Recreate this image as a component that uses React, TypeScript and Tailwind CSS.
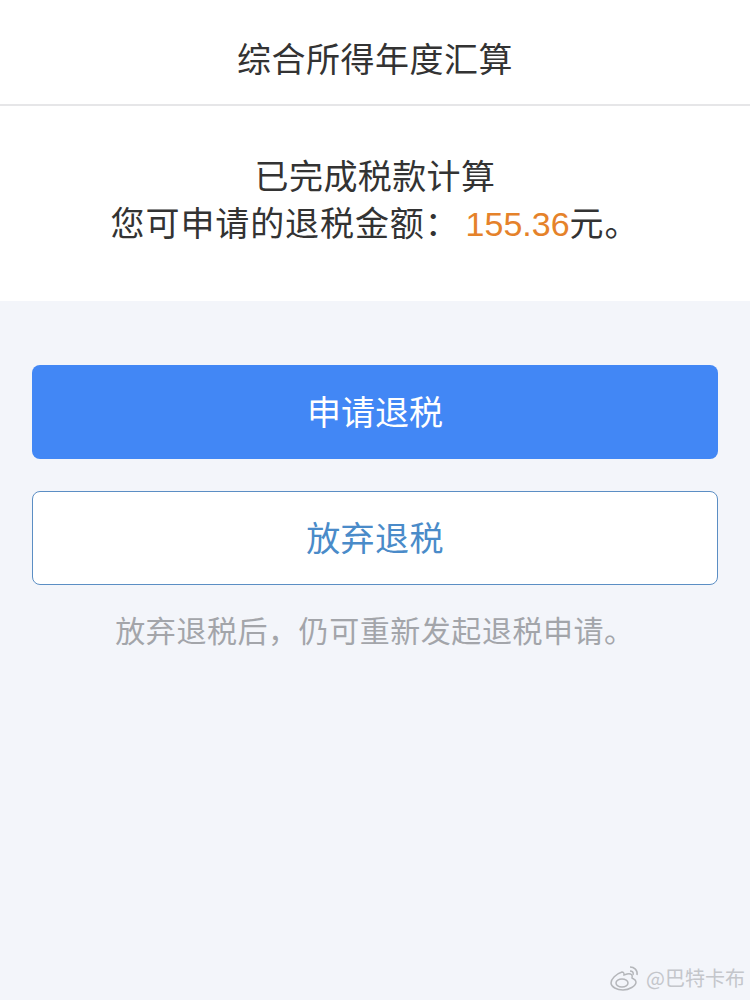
export default function App() {
  return (
    <div className="relative flex h-[1000px] w-[750px] flex-col bg-[#f3f5fa] font-['Noto_Sans_CJK_SC',sans-serif]">
      <header className="flex h-[106px] items-center justify-center border-b-2 border-[#e6e6e8] bg-white pt-[11px]">
        <h1 className="text-[34px] leading-none tracking-[0.5px] text-[#333333]">综合所得年度汇算</h1>
      </header>

      <section className="flex h-[195px] flex-col items-center bg-white pt-[45px] text-[34px] leading-[47px] text-[#333333]">
        <p className="tracking-[0.4px]">已完成税款计算</p>
        <p className="tracking-[0.9px]">
          您可申请的退税金额：
          <span className="ml-[6px] font-['Liberation_Sans',sans-serif] tracking-normal text-[#e5822a]">155.36</span>元。
        </p>
      </section>

      <main className="flex flex-col px-8 pt-16">
        <button className="h-[94px] rounded-lg bg-[#4287f5] pb-1 text-[34px] text-white">申请退税</button>
        <button className="mt-8 h-[94px] rounded-lg border border-[#5b8ec4] bg-white pb-1 text-[34px] tracking-[0.4px] text-[#4a8bc9]">
          放弃退税
        </button>
        <p className="mt-5 text-center text-[30px] leading-[48px] tracking-[0.55px] text-[#a3a5aa]">
          放弃退税后，仍可重新发起退税申请。
        </p>
      </main>

      {/* watermark */}
      <div className="absolute right-[5px] bottom-2 flex items-center gap-1 text-[20px] leading-none text-[#c4c6cb]">
        <svg width="34" height="28" viewBox="0 0 34 28" fill="none" stroke="#b4b6ba" strokeWidth="1.5">
          <path d="M14 8C8 10 3 15 3 19c0 4 6 7 12 7s13-4 13-8c0-3-3-3-4-4 1-3-1-5-5-4l-3 1c0-2 0-3-2-3Z" />
          <ellipse cx="14" cy="19" rx="6" ry="4" />
          <path d="M22 3c4 0 8 3 7 8M22 7c2 0 4 1 3 4" />
        </svg>
        <span>@巴特卡布</span>
      </div>
    </div>
  );
}
